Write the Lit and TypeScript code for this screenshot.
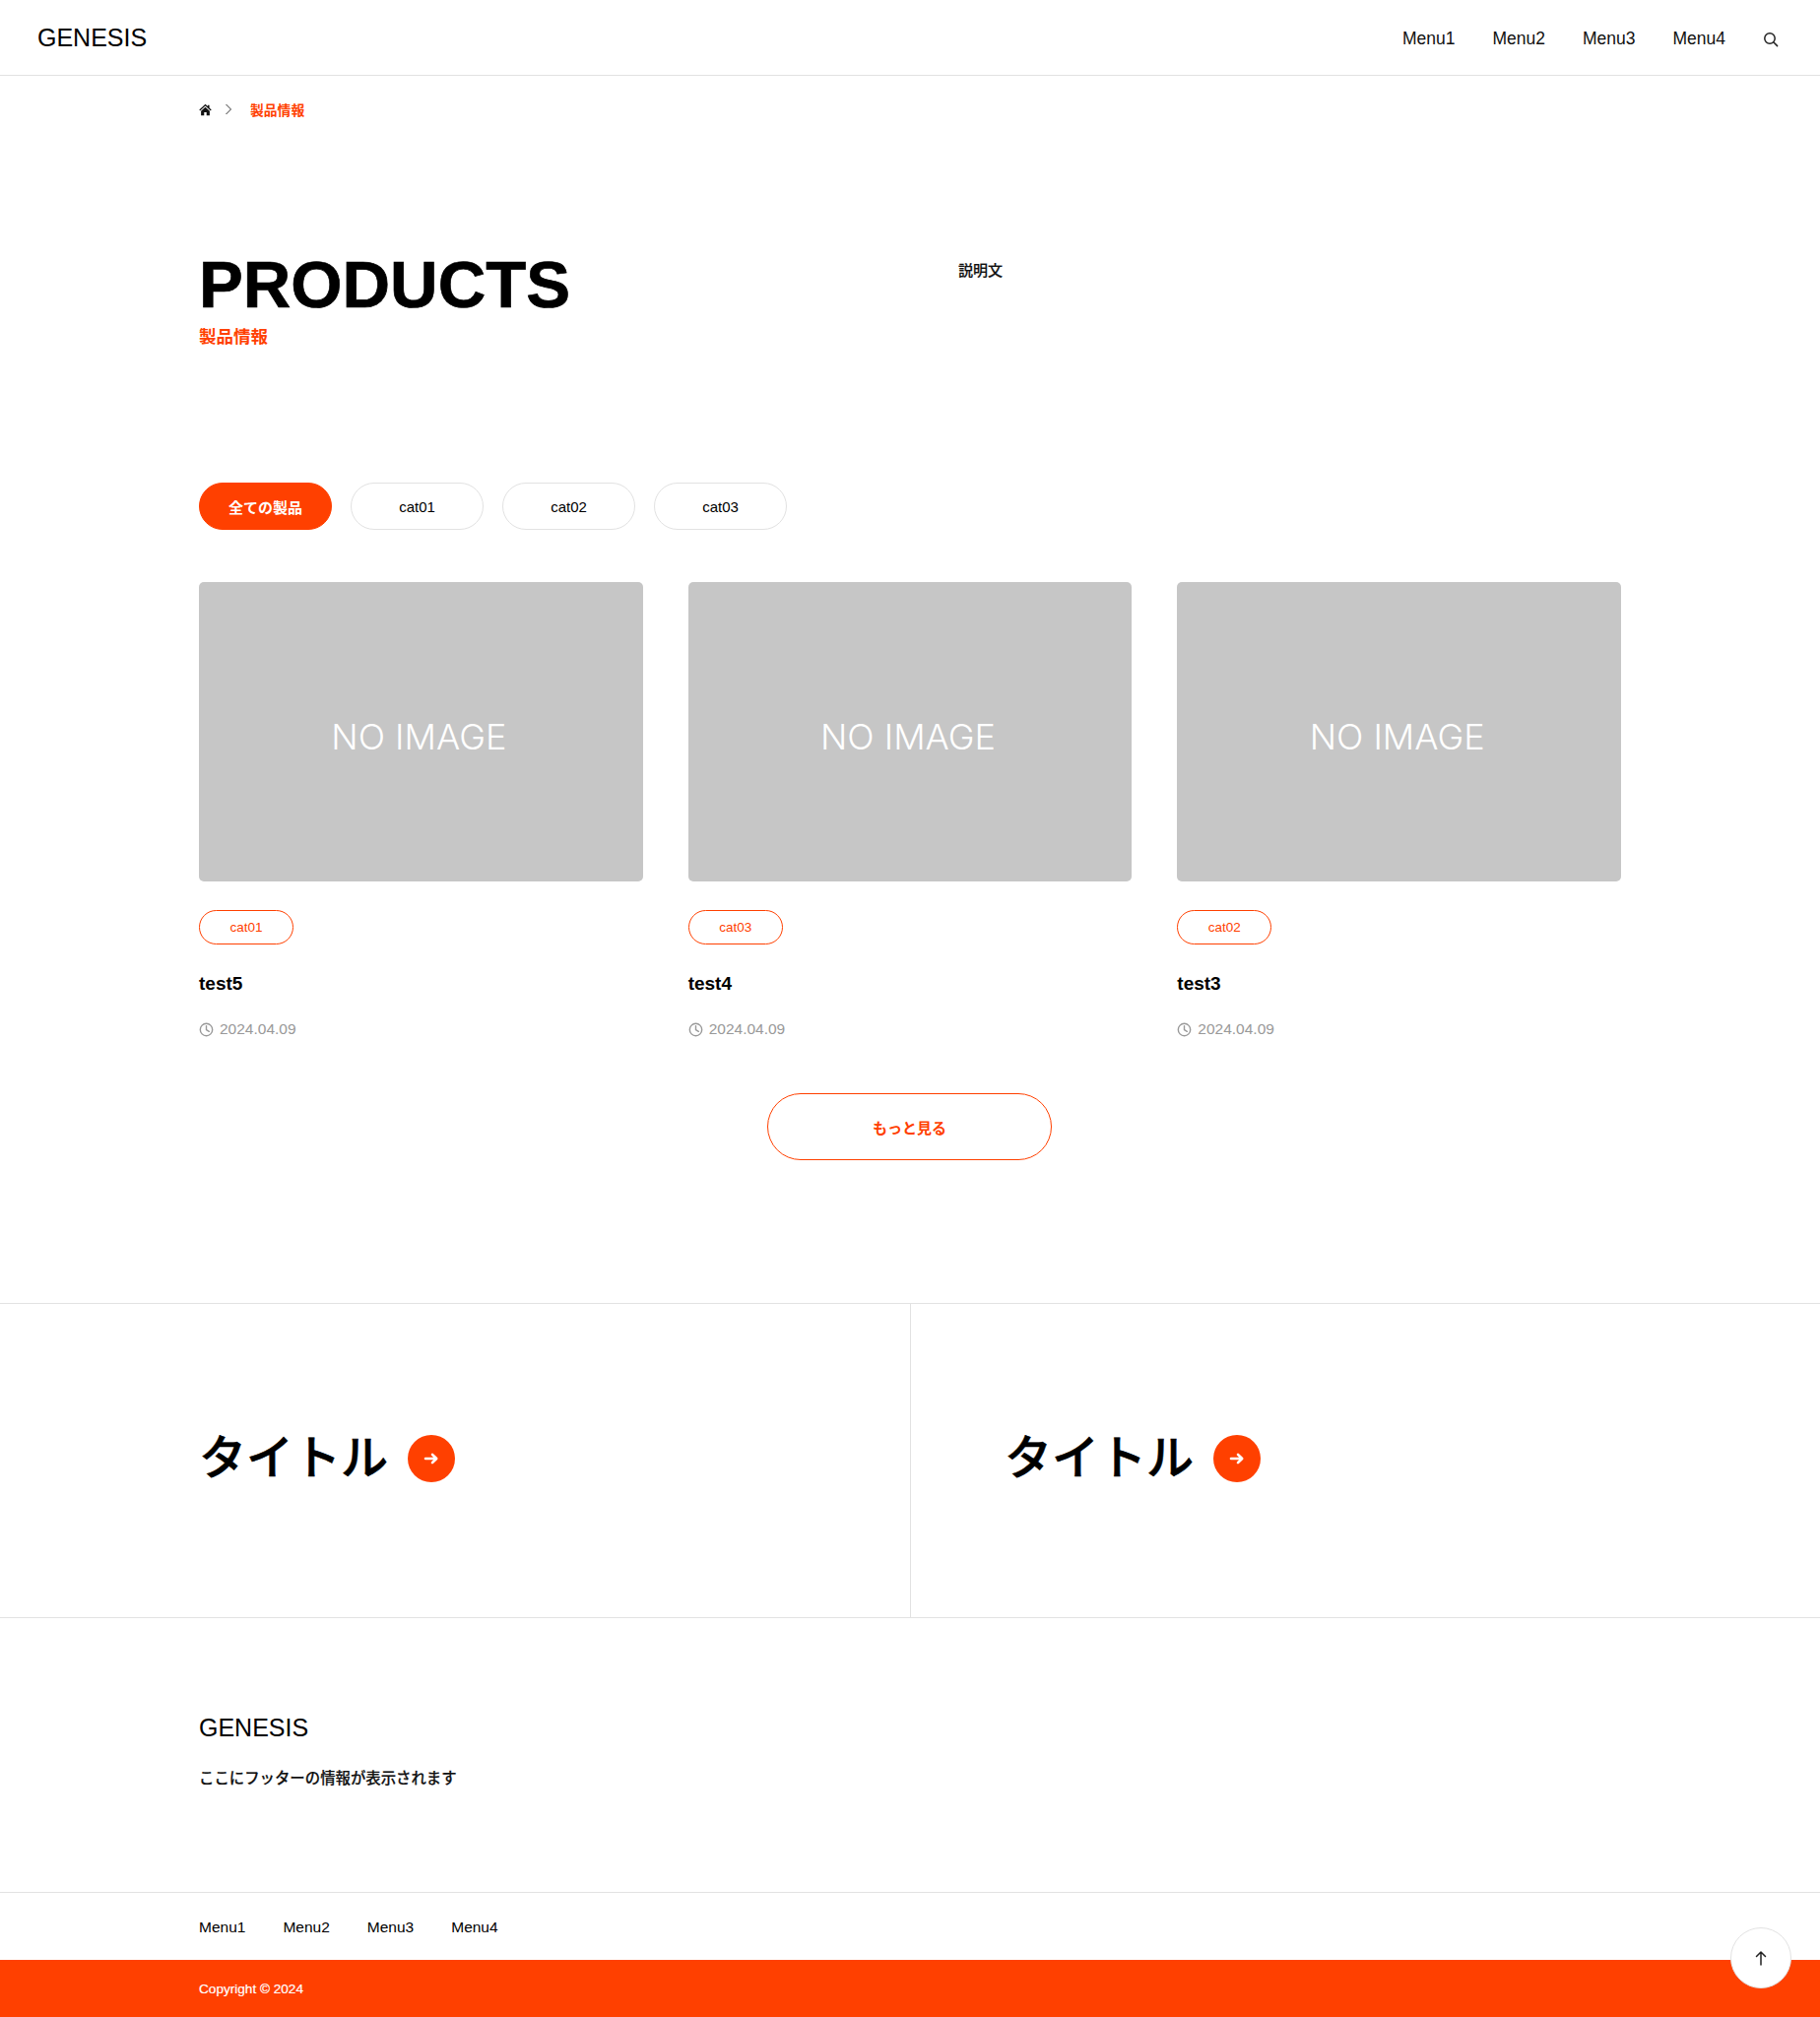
import { LitElement, html, css, svg } from "lit";
import { customElement } from "lit/decorators.js";

const cards = [
  { cat: "cat01", title: "test5" },
  { cat: "cat03", title: "test4" },
  { cat: "cat02", title: "test3" },
];
const menus = ["Menu1", "Menu2", "Menu3", "Menu4"];
const arrow = svg`<svg class="arr" viewBox="0 0 16 16" fill="none" stroke="#fff" stroke-width="2.6" stroke-linecap="round" stroke-linejoin="round"><path d="M2 8h11M9 3.8 13.2 8 9 12.2"/></svg>`;

@customElement("app-root")
export class AppRoot extends LitElement {
  static styles = css`
    :host { display: block; font-family: "Liberation Sans", "Noto Sans CJK JP", sans-serif; color: #000; background: #fff; position: relative; height: 2048px; overflow: hidden; }
    a { color: inherit; text-decoration: none; }
    .header { height: 76px; border-bottom: 1px solid #e2e2e2; display: flex; align-items: center; justify-content: space-between; padding: 0 42px 0 38px; }
    .logo { font-size: 25px; }
    .nav { display: flex; align-items: center; gap: 38px; font-size: 17.5px; padding-top: 3px; color: #111; }
    .search { width: 16px; height: 16px; margin-top: 1px; }
    .wrap { margin: 0 202px; }
    .crumb { display: flex; align-items: center; height: 18px; margin-top: 25px; font-size: 13.8px; font-weight: 700; color: #ff4000; }
    .crumb .home { width: 13px; height: 13px; }
    .crumb .chev { width: 8px; height: 12px; margin: 0 18px 0 13px; }
    .intro { display: flex; margin-top: 130px; height: 240px; }
    .intro-l { width: 771px; }
    h1 { margin: 0; font-size: 67.2px; line-height: 78px; font-weight: 700; -webkit-text-stroke: 0.7px #000; }
    .sub { font-size: 17.5px; font-weight: 700; color: #ff4000; line-height: 26px; margin-top: 1px; }
    .desc { font-size: 15px; font-weight: 500; line-height: 24px; margin-top: 13px; color: #111; -webkit-text-stroke: 0.2px #111; }
    .filters { display: flex; gap: 19px; margin-bottom: 53px; }
    .pill { width: 135px; height: 48px; box-sizing: border-box; border: 1px solid #e2e2e2; border-radius: 24px; display: flex; align-items: center; justify-content: center; font-size: 15px; }
    .pill.on { background: #ff4000; border-color: #ff4000; color: #fff; font-weight: 700; }
    .grid { display: grid; grid-template-columns: repeat(3, 1fr); gap: 46px; }
    .thumb { height: 304px; background: #c6c6c6; border-radius: 5px; display: flex; align-items: center; justify-content: center; color: #fff; font-family: Inter, sans-serif; font-weight: 300; font-size: 36px; padding: 10px 4px 0 0; box-sizing: border-box; }
    .tag { width: 96px; height: 35px; box-sizing: border-box; border: 1px solid #ff4000; border-radius: 18px; display: flex; align-items: center; justify-content: center; color: #ff4000; font-size: 13.5px; margin-top: 29px; }
    .title { font-size: 19px; font-weight: 700; line-height: 26px; margin-top: 27px; }
    .date { display: flex; align-items: center; gap: 6px; font-size: 15.5px; color: #999; line-height: 20px; margin-top: 23px; }
    .date svg { width: 15px; height: 15px; }
    .more-row { display: flex; justify-content: center; margin-top: 55px; padding-right: 1px; }
    .more { width: 289px; height: 68px; box-sizing: border-box; border: 1px solid #ff4000; border-radius: 34px; display: flex; align-items: center; justify-content: center; color: #ff4000; font-weight: 700; font-size: 15px; }
    .links { display: grid; grid-template-columns: 924px 1fr; margin-top: 145px; height: 320px; box-sizing: border-box; border-top: 1px solid #e2e2e2; border-bottom: 1px solid #e2e2e2; }
    .link { display: flex; align-items: center; gap: 20px; padding: 0 0 5px 202px; font-size: 48px; font-weight: 500; line-height: 1; -webkit-text-stroke: 0.6px #000; }
    .link + .link { border-left: 1px solid #e2e2e2; padding-left: 95px; }
    .circle { width: 48px; height: 48px; border-radius: 50%; background: #ff4000; display: flex; align-items: center; justify-content: center; -webkit-text-stroke: 0; }
    .arr { width: 16px; height: 16px; }
    .foot-top { height: 279px; box-sizing: border-box; padding: 95px 202px 0; border-bottom: 1px solid #e2e2e2; }
    .foot-logo { font-size: 25px; line-height: 32px; }
    .foot-text { font-size: 15.4px; font-weight: 500; line-height: 24px; margin-top: 24px; color: #111; -webkit-text-stroke: 0.2px #111; }
    .foot-nav { height: 68px; display: flex; align-items: center; gap: 38px; padding: 2px 0 0 202px; box-sizing: border-box; font-size: 15.5px; }
    .copy { background: #ff4000; height: 58px; color: #fff; font-size: 13.6px; font-weight: 400; -webkit-text-stroke: 0.2px #fff; display: flex; align-items: center; padding-left: 202px; }
    .top { position: absolute; left: 1757px; top: 1957px; width: 62px; height: 62px; box-sizing: border-box; border-radius: 50%; background: #fff; border: 1px solid #e2e2e2; display: flex; align-items: center; justify-content: center; }
    .top svg { width: 14px; height: 16px; }
  `;

  render() {
    return html`
      <header class="header">
        <div class="logo">GENESIS</div>
        <nav class="nav">
          ${menus.map((m) => html`<a>${m}</a>`)}
          <svg class="search" viewBox="0 0 16 16" fill="none" stroke="#222" stroke-width="1.5" stroke-linecap="round"><circle cx="7" cy="7" r="5.2"/><path d="m11 11 3.6 3.6"/></svg>
        </nav>
      </header>
      <div class="wrap">
        <div class="crumb">
          <svg class="home" viewBox="0 0 16 16" fill="#111"><path d="M8 1 0.4 8l1 1.1L8 3.2l6.6 5.9 1-1.1L13 5.6V2h-2v1.8z"/><path d="M8 4.6 2.6 9.5V15h3.9v-4h3v4h3.9V9.5z"/></svg>
          <svg class="chev" viewBox="0 0 8 12" fill="none" stroke="#333" stroke-width="1"><path d="m1.5 1 5 5-5 5"/></svg>
          <span>製品情報</span>
        </div>
        <section class="intro">
          <div class="intro-l">
            <h1>PRODUCTS</h1>
            <div class="sub">製品情報</div>
          </div>
          <div class="desc">説明文</div>
        </section>
        <div class="filters">
          <a class="pill on">全ての製品</a>
          <a class="pill">cat01</a>
          <a class="pill">cat02</a>
          <a class="pill">cat03</a>
        </div>
        <div class="grid">
          ${cards.map((c) => html`
            <article>
              <div class="thumb">NO IMAGE</div>
              <div class="tag">${c.cat}</div>
              <div class="title">${c.title}</div>
              <div class="date">
                <svg viewBox="0 0 16 16" fill="none" stroke="#999" stroke-width="1.5" stroke-linecap="round" stroke-linejoin="round"><circle cx="8" cy="8" r="6.6"/><path d="M8 4v4.2l3 1.8"/></svg>
                <span>2024.04.09</span>
              </div>
            </article>`)}
        </div>
        <div class="more-row"><a class="more">もっと見る</a></div>
      </div>
      <section class="links">
        <a class="link"><span>タイトル</span><span class="circle">${arrow}</span></a>
        <a class="link"><span>タイトル</span><span class="circle">${arrow}</span></a>
      </section>
      <footer>
        <div class="foot-top">
          <div class="foot-logo">GENESIS</div>
          <div class="foot-text">ここにフッターの情報が表示されます</div>
        </div>
        <div class="foot-nav">${menus.map((m) => html`<a>${m}</a>`)}</div>
        <div class="copy">Copyright © 2024</div>
      </footer>
      <a class="top"><svg viewBox="0 0 14 16" fill="none" stroke="#222" stroke-width="1.5" stroke-linecap="round" stroke-linejoin="round"><path d="M7 15V2M2.5 6.5 7 2l4.5 4.5"/></svg></a>
    `;
  }
}
